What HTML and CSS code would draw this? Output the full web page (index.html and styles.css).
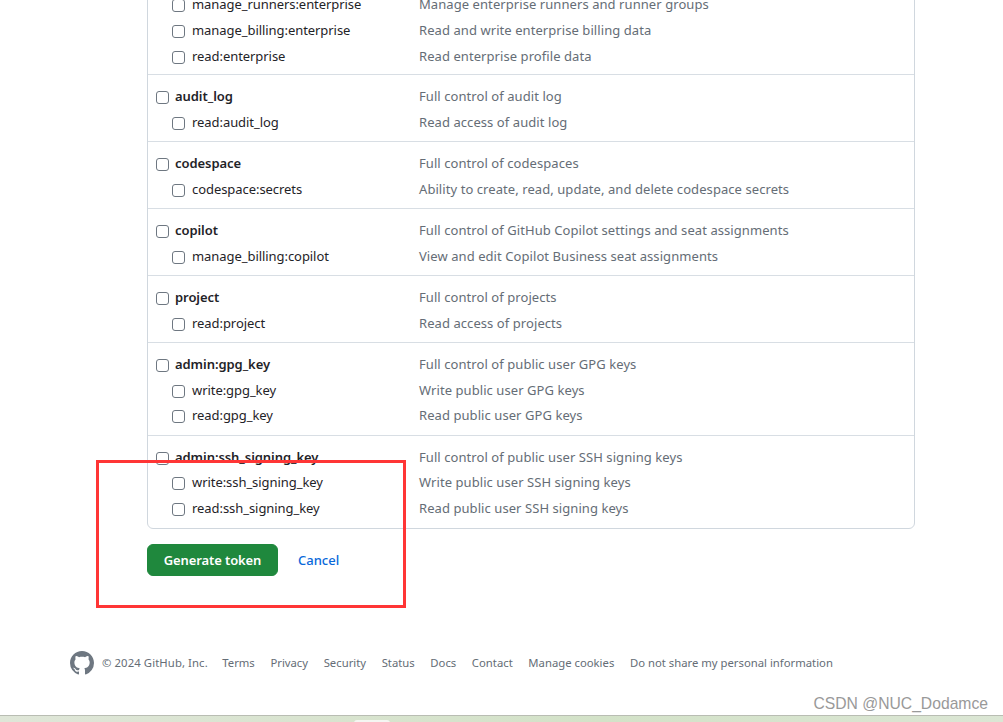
FILE: index.html
```html
<!DOCTYPE html>
<html lang="en">
<head>
<meta charset="utf-8">
<title>New personal access token</title>
<link rel="stylesheet" href="styles.css">
</head>
<body>
<div class="page">
  <main class="content">
    <div class="scopes">
      <section class="group">
        <div class="row child"><label class="name"><input type="checkbox">manage_runners:enterprise</label><span class="desc">Manage enterprise runners and runner groups</span></div>
        <div class="row child"><label class="name"><input type="checkbox">manage_billing:enterprise</label><span class="desc">Read and write enterprise billing data</span></div>
        <div class="row child"><label class="name"><input type="checkbox">read:enterprise</label><span class="desc">Read enterprise profile data</span></div>
      </section>
      <section class="group">
        <div class="row"><label class="name strong"><input type="checkbox">audit_log</label><span class="desc">Full control of audit log</span></div>
        <div class="row child"><label class="name"><input type="checkbox">read:audit_log</label><span class="desc">Read access of audit log</span></div>
      </section>
      <section class="group">
        <div class="row"><label class="name strong"><input type="checkbox">codespace</label><span class="desc">Full control of codespaces</span></div>
        <div class="row child"><label class="name"><input type="checkbox">codespace:secrets</label><span class="desc">Ability to create, read, update, and delete codespace secrets</span></div>
      </section>
      <section class="group">
        <div class="row"><label class="name strong"><input type="checkbox">copilot</label><span class="desc">Full control of GitHub Copilot settings and seat assignments</span></div>
        <div class="row child"><label class="name"><input type="checkbox">manage_billing:copilot</label><span class="desc">View and edit Copilot Business seat assignments</span></div>
      </section>
      <section class="group">
        <div class="row"><label class="name strong"><input type="checkbox">project</label><span class="desc">Full control of projects</span></div>
        <div class="row child"><label class="name"><input type="checkbox">read:project</label><span class="desc">Read access of projects</span></div>
      </section>
      <section class="group">
        <div class="row"><label class="name strong"><input type="checkbox">admin:gpg_key</label><span class="desc">Full control of public user GPG keys</span></div>
        <div class="row child"><label class="name"><input type="checkbox">write:gpg_key</label><span class="desc">Write public user GPG keys</span></div>
        <div class="row child"><label class="name"><input type="checkbox">read:gpg_key</label><span class="desc">Read public user GPG keys</span></div>
      </section>
      <section class="group">
        <div class="row"><label class="name strong"><input type="checkbox">admin:ssh_signing_key</label><span class="desc">Full control of public user SSH signing keys</span></div>
        <div class="row child"><label class="name"><input type="checkbox">write:ssh_signing_key</label><span class="desc">Write public user SSH signing keys</span></div>
        <div class="row child"><label class="name"><input type="checkbox">read:ssh_signing_key</label><span class="desc">Read public user SSH signing keys</span></div>
      </section>
    </div>
    <div class="actions">
      <button class="primary" type="button">Generate token</button>
      <a class="cancel" href="#">Cancel</a>
    </div>
  </main>
  <footer class="footer">
    <svg class="mark" viewBox="0 0 16 16" aria-hidden="true"><path d="M8 0c4.42 0 8 3.58 8 8a8.013 8.013 0 0 1-5.45 7.59c-.4.08-.55-.17-.55-.38 0-.27.01-1.13.01-2.2 0-.75-.25-1.23-.54-1.48 1.78-.2 3.65-.88 3.65-3.95 0-.88-.31-1.59-.82-2.15.08-.2.36-1.02-.08-2.12 0 0-.67-.22-2.2.82-.64-.18-1.32-.27-2-.27-.68 0-1.36.09-2 .27-1.53-1.03-2.2-.82-2.2-.82-.44 1.1-.16 1.92-.08 2.12-.51.56-.82 1.28-.82 2.15 0 3.06 1.86 3.75 3.64 3.95-.23.2-.44.55-.51 1.07-.46.21-1.61.55-2.33-.66-.15-.24-.6-.83-1.23-.82-.67.01-.27.38.01.53.34.19.73.9.82 1.13.16.45.68 1.31 2.69.94 0 .67.01 1.3.01 1.49 0 .21-.15.45-.55.38A7.995 7.995 0 0 1 0 8c0-4.42 3.58-8 8-8Z"/></svg>
    <span class="copy">© 2024 GitHub, Inc.</span>
    <nav class="links">
      <a href="#">Terms</a>
      <a href="#">Privacy</a>
      <a href="#">Security</a>
      <a href="#">Status</a>
      <a href="#">Docs</a>
      <a href="#">Contact</a>
      <a href="#">Manage cookies</a>
      <a href="#">Do not share my personal information</a>
    </nav>
  </footer>
  <div class="desktop"><span class="tab"></span></div>
</div>
<div class="highlight"></div>
<div class="watermark">CSDN @NUC_Dodamce</div>
</body>
</html>
```

FILE: styles.css
```css
html, body {
  margin: 0;
  padding: 0;
  height: 100%;
  overflow: hidden;
  background: #fff;
}
body {
  font-family: "Noto Sans", "Open Sans", sans-serif;
  font-size: 13px;
  color: #1f2328;
}
.page {
  display: flex;
  flex-direction: column;
  height: 722px;
  overflow: hidden;
}
.content {
  flex: 1;
  padding: 0 88px 0 147px;
  margin-top: -17.75px;
}
.scopes {
  width: 768px;
  box-sizing: border-box;
  border: 1px solid #d0d7de;
  border-radius: 6px;
}
.group {
  padding: 8px 0 6.5px;
  border-bottom: 1px solid #d8dee4;
}
.group:first-child {
  padding-bottom: 5.5px;
}
.group:last-child {
  border-bottom: 0;
}
.row {
  display: flex;
  align-items: center;
  height: 25.75px;
  padding-left: 8px;
}
.row.child {
  padding-left: 24px;
}
.name {
  display: flex;
  align-items: center;
  width: 263px;
  flex: none;
  letter-spacing: -0.06px;
}
.row.child .name {
  width: 247px;
}
.row.child .name input {
  margin-right: 7px;
}
.strong {
  font-weight: 600;
}
.name input {
  appearance: none;
  -webkit-appearance: none;
  flex: none;
  box-sizing: border-box;
  width: 13px;
  height: 13px;
  margin: 3px 6px 0 0;
  border: 1px solid #6e7781;
  border-radius: 3px;
  background: #fff;
}
.desc {
  color: #656d76;
  letter-spacing: 0.07px;
}
.actions {
  display: flex;
  align-items: center;
  gap: 20px;
  margin-top: 15.5px;
}
.primary {
  width: 131px;
  height: 32px;
  padding: 0;
  border: 1px solid #1f883d;
  border-radius: 6px;
  background: #1f883d;
  color: #fff;
  font: 600 13px "Noto Sans", "Open Sans", sans-serif;
  letter-spacing: -0.1px;
}
.cancel {
  color: #0969da;
  text-decoration: none;
  font-weight: 500;
}
.footer {
  display: flex;
  align-items: center;
  height: 25px;
  margin-bottom: 40px;
  padding-left: 70px;
  color: #656d76;
  font-size: 11.3px;
}
.mark {
  width: 24px;
  height: 24px;
  fill: #6e7781;
  margin-right: 8px;
  flex: none;
}
.copy {
  margin-right: 14.5px;
  letter-spacing: 0.1px;
}
.links {
  display: flex;
  gap: 15.6px;
}
.links a {
  color: #656d76;
  text-decoration: none;
}
.desktop {
  flex: none;
  position: relative;
  height: 7px;
  box-sizing: border-box;
  border-top: 1px solid #b9bdb3;
  background: linear-gradient(90deg, #dfe6d8, #d3e2c8 60%, #dbe6d4);
}
.tab {
  position: absolute;
  left: 354px;
  top: 4px;
  width: 36px;
  height: 3px;
  border-radius: 3px 3px 0 0;
  background: #f4f6f2;
}
.highlight {
  position: absolute;
  left: 96px;
  top: 460px;
  width: 310px;
  height: 148px;
  box-sizing: border-box;
  border: 3px solid #ff3535;
}
.watermark {
  position: absolute;
  right: 15px;
  top: 695px;
  font-family: "Liberation Sans", Arial, sans-serif;
  font-size: 15.7px;
  color: #999;
}
```
